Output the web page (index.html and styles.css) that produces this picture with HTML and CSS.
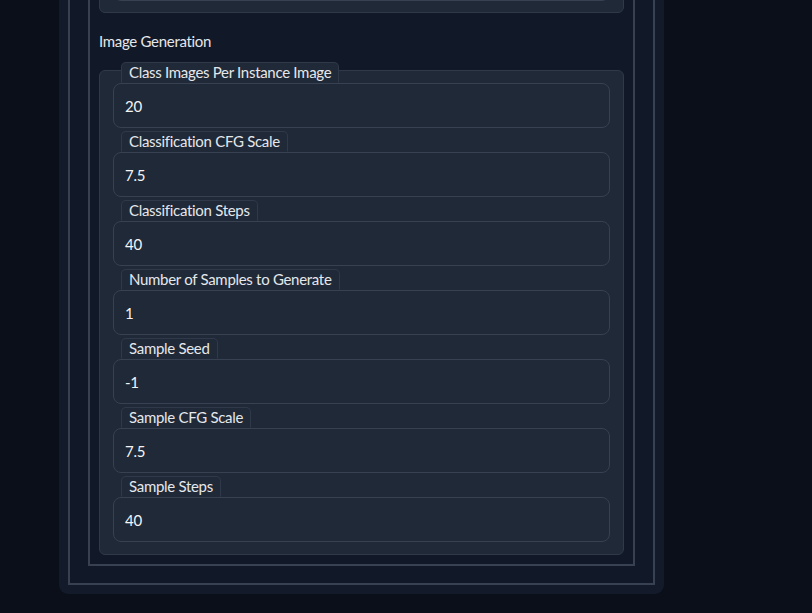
FILE: index.html
```html
<!DOCTYPE html>
<html lang="en">
<head>
<meta charset="utf-8">
<title>Image Generation</title>
<link rel="stylesheet" href="styles.css">
</head>
<body>
<div class="page">
  <div class="panel">
    <div class="frame-outer">
      <div class="frame-inner">
        <div class="block block-top">
          <div class="field-input"></div>
        </div>
        <div class="section-title">Image Generation</div>
        <div class="block">
          <div class="fields">
            <div class="field">
              <span class="field-label">Class Images Per Instance Image</span>
              <div class="field-input">20</div>
            </div>
            <div class="field">
              <span class="field-label">Classification CFG Scale</span>
              <div class="field-input">7.5</div>
            </div>
            <div class="field">
              <span class="field-label">Classification Steps</span>
              <div class="field-input">40</div>
            </div>
            <div class="field">
              <span class="field-label">Number of Samples to Generate</span>
              <div class="field-input">1</div>
            </div>
            <div class="field">
              <span class="field-label">Sample Seed</span>
              <div class="field-input">-1</div>
            </div>
            <div class="field">
              <span class="field-label">Sample CFG Scale</span>
              <div class="field-input">7.5</div>
            </div>
            <div class="field">
              <span class="field-label">Sample Steps</span>
              <div class="field-input">40</div>
            </div>
          </div>
        </div>
      </div>
    </div>
  </div>
  <div class="footer-line"></div>
</div>
</body>
</html>
```

FILE: styles.css
```css
* {
  box-sizing: border-box;
}

html, body {
  margin: 0;
  padding: 0;
  background: #0b0f19;
  height: 613px;
  overflow: hidden;
  font-family: Lato, "Liberation Sans", sans-serif;
  font-size: 15px;
  letter-spacing: -0.3px;
  color: #e5e7eb;
}

.page {
  display: flex;
  flex-direction: column;
}

.panel {
  margin-top: -57px;
  margin-left: 59px;
  width: 605px;
  background: #131a29;
  border-radius: 0 0 9px 9px;
  padding: 0 9px 9px 9px;
}

.frame-outer {
  width: 587px;
  border: 2px solid #374151;
  border-top: none;
  background: #111827;
  padding: 0 18px 17px 18px;
}

.frame-inner {
  border: 2px solid #374151;
  border-top: none;
  padding: 0 9px 9px 9px;
}

.block {
  background: #1f2937;
  border: 1px solid #2f3949;
  border-radius: 6px;
  padding: 0 13px 12px 13px;
}

.block-top {
  padding-top: 12px;
  padding-bottom: 11px;
}

.section-title {
  line-height: 20px;
  padding: 18px 0 19px 0;
  color: #e5e7eb;
}

.fields {
  display: flex;
  flex-direction: column;
  gap: 3px;
  margin-top: -9px;
}

.field {
  display: flex;
  flex-direction: column;
  align-items: flex-start;
}

.field-label {
  height: 21px;
  line-height: 19px;
  margin-left: 8px;
  padding: 0 7px;
  background: #1f2937;
  border: 1px solid #2f3949;
  border-bottom-color: transparent;
  border-radius: 5px 5px 0 0;
  color: #e5e7eb;
  white-space: nowrap;
}

.field-input {
  width: 100%;
  height: 45px;
  display: flex;
  align-items: center;
  padding: 0 11px;
  background: #1f2937;
  border: 1px solid #374151;
  border-radius: 8px;
  color: #f3f4f6;
  font-size: 15px;
}

.footer-line {
  margin-top: 19px;
  height: 1px;
  background: #374151;
}
```
